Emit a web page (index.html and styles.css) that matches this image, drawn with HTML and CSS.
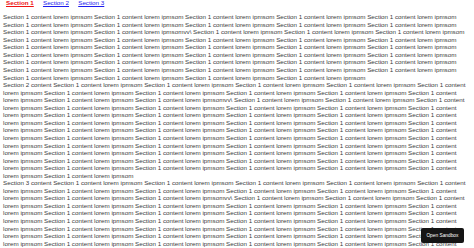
FILE: index.html
```html
<!DOCTYPE html>
<html>
<head>
<meta charset="utf-8">
<link rel="stylesheet" href="styles.css">
</head>
<body>
<nav class="nav">
<a class="nav-link active" href="#section1">Section 1</a>
<a class="nav-link" href="#section2">Section 2</a>
<a class="nav-link" href="#section3">Section 3</a>
</nav>
<main class="content">
<div class="section" id="section1">
Section 1 content lorem ipmsom Section 1 content lorem ipmsom Section 1 content lorem ipmsom Section 1 content lorem ipmsom Section 1 content lorem ipmsom
Section 1 content lorem ipmsom Section 1 content lorem ipmsom Section 1 content lorem ipmsom Section 1 content lorem ipmsom Section 1 content lorem ipmsom
Section 1 content lorem ipmsom Section 1 content lorem ipmsomvv\ Section 1 content lorem ipmsom Section 1 content lorem ipmsom Section 1 content lorem ipmsom
Section 1 content lorem ipmsom Section 1 content lorem ipmsom Section 1 content lorem ipmsom Section 1 content lorem ipmsom Section 1 content lorem ipmsom
Section 1 content lorem ipmsom Section 1 content lorem ipmsom Section 1 content lorem ipmsom Section 1 content lorem ipmsom Section 1 content lorem ipmsom
Section 1 content lorem ipmsom Section 1 content lorem ipmsom Section 1 content lorem ipmsom Section 1 content lorem ipmsom Section 1 content lorem ipmsom
Section 1 content lorem ipmsom Section 1 content lorem ipmsom Section 1 content lorem ipmsom Section 1 content lorem ipmsom Section 1 content lorem ipmsom
Section 1 content lorem ipmsom Section 1 content lorem ipmsom Section 1 content lorem ipmsom Section 1 content lorem ipmsom Section 1 content lorem ipmsom
Section 1 content lorem ipmsom Section 1 content lorem ipmsom Section 1 content lorem ipmsom Section 1 content lorem ipmsom
</div>
<div class="section" id="section2">
Section 2 content
Section 1 content lorem ipmsom Section 1 content lorem ipmsom Section 1 content lorem ipmsom Section 1 content lorem ipmsom Section 1 content lorem ipmsom
Section 1 content lorem ipmsom Section 1 content lorem ipmsom Section 1 content lorem ipmsom Section 1 content lorem ipmsom Section 1 content lorem ipmsom
Section 1 content lorem ipmsom Section 1 content lorem ipmsomvv\ Section 1 content lorem ipmsom Section 1 content lorem ipmsom Section 1 content lorem ipmsom
Section 1 content lorem ipmsom Section 1 content lorem ipmsom Section 1 content lorem ipmsom Section 1 content lorem ipmsom Section 1 content lorem ipmsom
Section 1 content lorem ipmsom Section 1 content lorem ipmsom Section 1 content lorem ipmsom Section 1 content lorem ipmsom Section 1 content lorem ipmsom
Section 1 content lorem ipmsom Section 1 content lorem ipmsom Section 1 content lorem ipmsom Section 1 content lorem ipmsom Section 1 content lorem ipmsom
Section 1 content lorem ipmsom Section 1 content lorem ipmsom Section 1 content lorem ipmsom Section 1 content lorem ipmsom Section 1 content lorem ipmsom
Section 1 content lorem ipmsom Section 1 content lorem ipmsom Section 1 content lorem ipmsom Section 1 content lorem ipmsom Section 1 content lorem ipmsom
Section 1 content lorem ipmsom Section 1 content lorem ipmsom Section 1 content lorem ipmsom Section 1 content lorem ipmsom Section 1 content lorem ipmsom
Section 1 content lorem ipmsom Section 1 content lorem ipmsom Section 1 content lorem ipmsom Section 1 content lorem ipmsom Section 1 content lorem ipmsom
Section 1 content lorem ipmsom Section 1 content lorem ipmsom Section 1 content lorem ipmsom Section 1 content lorem ipmsom Section 1 content lorem ipmsom
Section 1 content lorem ipmsom Section 1 content lorem ipmsom Section 1 content lorem ipmsom Section 1 content lorem ipmsom Section 1 content lorem ipmsom
Section 1 content lorem ipmsom
</div>
<div class="section" id="section3">
Section 3 content
Section 1 content lorem ipmsom Section 1 content lorem ipmsom Section 1 content lorem ipmsom Section 1 content lorem ipmsom Section 1 content lorem ipmsom
Section 1 content lorem ipmsom Section 1 content lorem ipmsom Section 1 content lorem ipmsom Section 1 content lorem ipmsom Section 1 content lorem ipmsom
Section 1 content lorem ipmsom Section 1 content lorem ipmsomvv\ Section 1 content lorem ipmsom Section 1 content lorem ipmsom Section 1 content lorem ipmsom
Section 1 content lorem ipmsom Section 1 content lorem ipmsom Section 1 content lorem ipmsom Section 1 content lorem ipmsom Section 1 content lorem ipmsom
Section 1 content lorem ipmsom Section 1 content lorem ipmsom Section 1 content lorem ipmsom Section 1 content lorem ipmsom Section 1 content lorem ipmsom
Section 1 content lorem ipmsom Section 1 content lorem ipmsom Section 1 content lorem ipmsom Section 1 content lorem ipmsom Section 1 content lorem ipmsom
Section 1 content lorem ipmsom Section 1 content lorem ipmsom Section 1 content lorem ipmsom Section 1 content lorem ipmsom Section 1 content lorem ipmsom
Section 1 content lorem ipmsom Section 1 content lorem ipmsom Section 1 content lorem ipmsom Section 1 content lorem ipmsom Section 1 content lorem ipmsom
Section 1 content lorem ipmsom Section 1 content lorem ipmsom Section 1 content lorem ipmsom Section 1 content lorem ipmsom Section 1 content lorem ipmsom
Section 1 content lorem ipmsom Section 1 content lorem ipmsom Section 1 content lorem ipmsom Section 1 content lorem ipmsom Section 1 content lorem ipmsom
Section 1 content lorem ipmsom Section 1 content lorem ipmsom Section 1 content lorem ipmsom Section 1 content lorem ipmsom Section 1 content lorem ipmsom
Section 1 content lorem ipmsom Section 1 content lorem ipmsom Section 1 content lorem ipmsom Section 1 content lorem ipmsom Section 1 content lorem ipmsom
Section 1 content lorem ipmsom
</div>
</main>
<a class="sandbox-btn" href="#">Open Sandbox</a>
</body>
</html>
```
FILE: styles.css
```css
html, body {
  margin: 0;
  overflow: hidden;
}

body {
  padding: 0 3.1px;
  font-family: "Liberation Sans", Arial, sans-serif;
  font-size: 6.25px;
  line-height: 7.55px;
  color: #3c3c3c;
  background: #fff;
}

.nav {
  display: flex;
  gap: 9.2px;
  padding-left: 2.9px;
  height: 7.55px;
  margin-top: -0.6px;
  margin-bottom: 6.25px;
}

.nav-link {
  color: #1a1aee;
  text-decoration: underline;
}

.nav-link.active {
  color: #ee1111;
  font-weight: bold;
}

.sandbox-btn {
  position: fixed;
  right: 10px;
  bottom: 5px;
  height: 15px;
  line-height: 15px;
  padding: 0 5.6px;
  font-size: 4.8px;
  color: #fff;
  background: #151515;
  border-radius: 2px;
  text-decoration: none;
}
```
